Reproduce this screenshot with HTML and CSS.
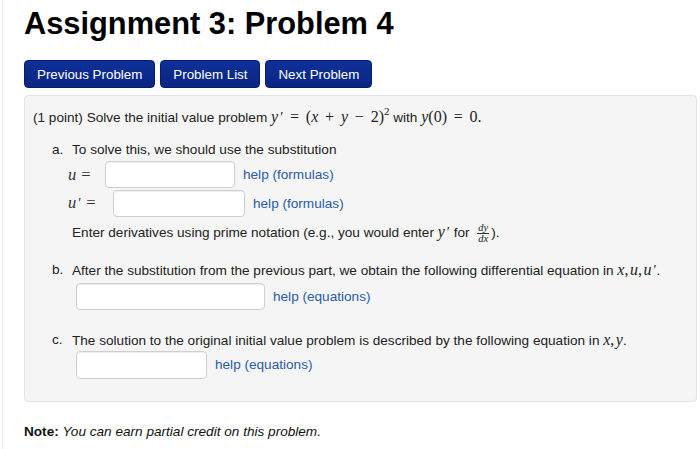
FILE: index.html
```html
<!DOCTYPE html>
<html>
<head>
<meta charset="utf-8">
<link rel="stylesheet" href="styles.css">
</head>
<body>
<h1 class="title">Assignment 3: Problem 4</h1>
<div class="nav">
  <span class="btn">Previous Problem</span>
  <span class="btn">Problem List</span>
  <span class="btn">Next Problem</span>
</div>
<div class="box">
  <div class="line">(1 point) Solve the initial value problem <span class="m"><i>y</i><span class="pr">′</span><span class="op">=</span>(<i>x</i><span class="op">+</span><i>y</i><span class="op">−</span>2)<sup class="sq">2</sup></span> with <span class="m"><i>y</i>(0)<span class="op">=</span>0.</span></div>

  <div class="part part-a">
    <span class="mk">a.</span>
    <div class="pbody">
      <div class="line">To solve this, we should use the substitution</div>
      <div class="frow frow-u">
        <span class="m lbl lbl-u"><i>u</i><span class="op">=</span></span>
        <span class="inp inp-130"></span>
        <span class="help">help (formulas)</span>
      </div>
      <div class="frow frow-u">
        <span class="m lbl lbl-up"><i>u</i><span class="pr">′</span><span class="op">=</span></span>
        <span class="inp inp-132"></span>
        <span class="help">help (formulas)</span>
      </div>
      <div class="line line-enter">Enter derivatives using prime notation (e.g., you would enter <span class="m"><i>y</i><span class="pr">′</span></span> for <span class="frac"><span class="num"><i>dy</i></span><span class="den"><i>dx</i></span></span>).</div>
    </div>
  </div>

  <div class="part part-b">
    <span class="mk">b.</span>
    <div class="pbody">
      <div class="line">After the substitution from the previous part, we obtain the following differential equation in <span class="m"><i>x</i><span class="cm">,</span><i>u</i><span class="cm">,</span><i>u</i><span class="pr">′</span></span>.</div>
      <div class="frow frow-in">
        <span class="inp inp-189"></span>
        <span class="help">help (equations)</span>
      </div>
    </div>
  </div>

  <div class="part part-c">
    <span class="mk">c.</span>
    <div class="pbody">
      <div class="line">The solution to the original initial value problem is described by the following equation in <span class="m"><i>x</i><span class="cm">,</span><i>y</i></span>.</div>
      <div class="frow frow-in frow-c">
        <span class="inp inp-131"></span>
        <span class="help">help (equations)</span>
      </div>
    </div>
  </div>
</div>
<div class="note"><b>Note:</b> <i>You can earn partial credit on this problem.</i></div>
</body>
</html>
```
FILE: styles.css
```css
html { background: #fff; }
body {
  margin: 0 0 0 2px;
  border-left: 1px solid #ececec;
  padding: 6px 3px 0 21px;
  min-height: 449px;
  box-sizing: border-box;
  font-family: "Liberation Sans", Arial, sans-serif;
  color: #222;
}
.title {
  margin: 0;
  font-size: 30.8px;
  line-height: 36px;
  font-weight: bold;
  color: #000;
}
.nav {
  display: flex;
  gap: 5px;
  margin-top: 18px;
}
.btn {
  display: flex;
  align-items: center;
  height: 28px;
  box-sizing: border-box;
  padding: 0 12px;
  font-size: 13.35px;
  color: #fff;
  background: linear-gradient(#0e3098, #0a2582);
  border: 1px solid #071d6a;
  border-radius: 4px;
}
.box {
  margin-top: 7px;
  background: #f5f5f5;
  border: 1px solid #e3e3e3;
  border-radius: 4px;
  padding: 12px 8px 22px;
  font-size: 13.6px;
  line-height: 18px;
}
.line { height: 18px; white-space: nowrap; }
.m {
  font-family: "Liberation Serif", "Times New Roman", serif;
  font-size: 16px;
}
.m i { font-style: italic; }
.pr { font-style: normal; font-size: 14px; margin-left: 2px; }
.op { margin: 0 6.8px; }
.cm { margin-right: 1.5px; }
.sq { font-size: 11px; line-height: 0; vertical-align: 7px; }
.part { display: flex; }
.part-a { margin-top: 15px; }
.part-b { margin-top: 19px; }
.part-c { margin-top: 21px; }
.mk { width: 20px; margin-left: 19px; flex: none; }
.pbody { display: flex; flex-direction: column; }
.frow {
  display: flex;
  align-items: center;
  height: 27px;
  margin-top: 2px;
}
.frow-u { margin-left: -4px; }
.frow-in { margin-top: 4px; margin-left: 4px; }
.frow-c { margin-top: 2px; height: 28px; }
.lbl { color: #333; white-space: nowrap; font-size: 16.5px; }
.lbl .op { margin-right: 0; margin-left: 5px; }
.lbl-u { width: 37px; }
.lbl-up { width: 45px; }
.inp {
  height: 100%;
  box-sizing: border-box;
  background: #fff;
  border: 1px solid #cfcfcf;
  border-radius: 4px;
  box-shadow: inset 0 1px 1px rgba(0,0,0,0.07);
}
.inp-130 { width: 130px; }
.inp-132 { width: 132px; }
.inp-189 { width: 189px; }
.inp-131 { width: 131px; }
.help {
  margin-left: 8px;
  color: #2b5ba8;
}
.line-enter { margin-top: 5px; height: 20px; line-height: 20px; }
.frac {
  display: inline-flex;
  flex-direction: column;
  align-items: center;
  vertical-align: 6px;
  font-family: "Liberation Serif", "Times New Roman", serif;
  font-size: 10.5px;
  line-height: 9px;
  margin: 0 2px 0 4px;
}
.frac .num { border-bottom: 1px solid #333; padding: 0 1px 1px; }
.note {
  margin-top: 21px;
  font-size: 13.6px;
  line-height: 18px;
  color: #111;
}
```
